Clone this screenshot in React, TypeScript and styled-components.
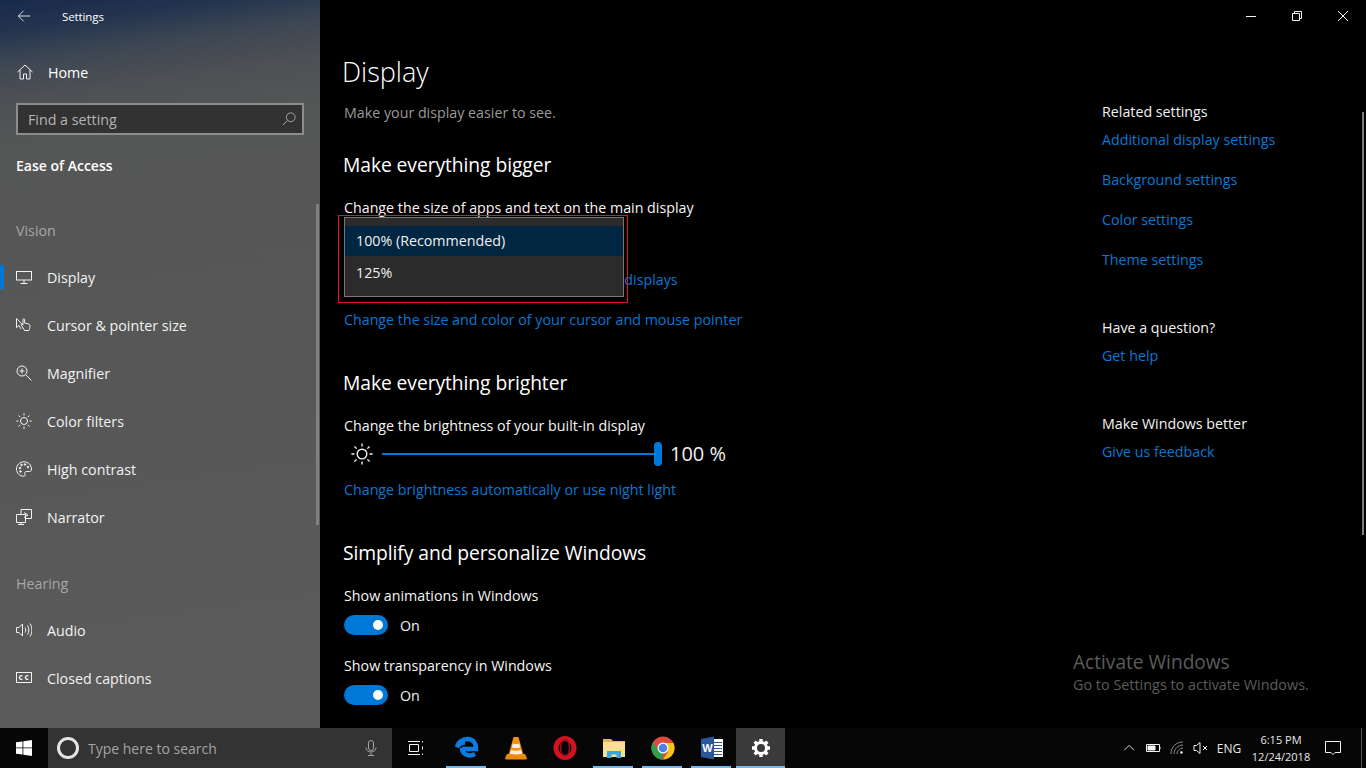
import React from 'react';
import styled, { createGlobalStyle } from 'styled-components';

const Global = createGlobalStyle`
  html, body { margin: 0; padding: 0; background: #000; overflow: hidden; }
  body { font-family: "Open Sans", "Noto Sans", "Liberation Sans", sans-serif; color: #fff; }
  * { box-sizing: border-box; }
`;

const Page = styled.div`
  width: 1366px; height: 768px; display: flex; flex-direction: column; overflow: hidden;
`;
const Windowed = styled.div`
  flex: 0 0 728px; display: flex; position: relative; overflow: hidden;
`;
const Sidebar = styled.nav`
  flex: 0 0 320px; position: relative; display: flex; flex-direction: column;
  background: linear-gradient(172deg, #182a4b 0, #24344f 32px, #3c4653 62px, #4d5054 100px, #555656 150px, #575757 400px, #5b5b5b 728px);
`;
const SideBar = styled.div`
  position: absolute; left: 316px; top: 204px; width: 3px; height: 321px; background: #808080;
`;
const TitleRow = styled.div`
  height: 32px; display: flex; align-items: center; padding-left: 17px; gap: 31px;
  font-size: 11.5px; letter-spacing: -0.1px;
`;
const HomeRow = styled.div`
  height: 48px; margin-top: 16px; display: flex; align-items: center; padding-left: 17px; gap: 15px; font-size: 14.25px;
`;
const SearchBox = styled.div`
  margin: 7px 16px 0; width: 288px; height: 32px; border: 2px solid #8c8c8c; background: #323232;
  display: flex; align-items: center; justify-content: space-between; padding: 0 6px 0 10px;
  font-size: 14.25px; color: #b4b4b4;
`;
const Category = styled.div`
  margin: 20px 0 0 16px; height: 22px; line-height: 22px; font-size: 14px; font-weight: 600;
`;
const GroupHead = styled.div<{ $top: number }>`
  margin: ${p => p.$top}px 0 0 16px; height: 22px; line-height: 21px; font-size: 14.25px; color: #a6a6a6;
`;
const NavRow = styled.div<{ $active?: boolean }>`
  height: 48px; display: flex; align-items: center; padding-left: 16px; gap: 15px; font-size: 14.25px; position: relative; color: #f2f2f2;
  &::before {
    content: ''; display: ${p => (p.$active ? 'block' : 'none')}; position: absolute; left: 0; top: 12px; width: 4px; height: 24px; background: #0078d7;
  }
`;
const NavList = styled.div<{ $top: number }>`
  margin-top: ${p => p.$top}px;
`;

const Content = styled.main`
  flex: 1; display: grid; grid-template-columns: 782px 1fr; background: #000; position: relative;
`;
const MainCol = styled.div`
  padding: 0 0 0 24px;
`;
const PageTitle = styled.h1`
  margin: 52px 0 0 -2px; height: 40px; line-height: 40px; font-size: 27px; font-weight: 300;
`;
const Sub = styled.p`
  margin: 10px 0 0; height: 22px; line-height: 22px; font-size: 14.25px; color: #9a9a9a;
`;
const Heading = styled.h2<{ $top: number }>`
  margin: ${p => p.$top}px 0 0 -1px; height: 28px; line-height: 28px; font-size: 19.3px; font-weight: 400; letter-spacing: -0.08px;
`;
const Label = styled.div<{ $top: number }>`
  margin-top: ${p => p.$top}px; height: 22px; line-height: 22px; font-size: 14.25px; color: #f5f5f5;
`;
const Link = styled.a<{ $top: number }>`
  display: block; margin-top: ${p => p.$top}px; height: 22px; line-height: 22px; font-size: 14.25px; color: #0a78d2;
`;
const SliderRow = styled.div`
  margin-top: 5px; height: 24px; display: flex; align-items: center; margin-left: 7px;
`;
const Track = styled.div`
  width: 273px; height: 2px; margin-left: 9px; background: #0078d7;
`;
const Thumb = styled.div`
  width: 8px; height: 24px; border-radius: 4px; background: #0078d7; margin-left: -1px;
`;
const SliderValue = styled.span`
  font-size: 20px; margin: 0 0 2px 8px; color: #f0f0f0;
`;
const ToggleRow = styled.div`
  margin-top: 8px; height: 20px; display: flex; align-items: center; gap: 12px; font-size: 14.25px; color: #f0f0f0;
`;
const Toggle = styled.div`
  width: 44px; height: 20px; border-radius: 10px; background: #0078d7; display: flex; align-items: center; justify-content: flex-end; padding-right: 5px;
  &::after { content: ''; width: 10px; height: 10px; border-radius: 50%; background: #fff; }
`;
const Popup = styled.div`
  position: absolute; left: 24px; top: 217px; width: 280px; height: 80px; background: #2b2b2b; border: 1px solid #767676; padding-top: 8px;
`;
const PopupOption = styled.div<{ $selected?: boolean }>`
  height: 30px; line-height: 30px; padding-left: 11px; font-size: 14.25px; margin-bottom: 2px; background: ${p => (p.$selected ? '#002642' : 'transparent')}; color: #f0f0f0;
`;
const RedBox = styled.div`
  position: absolute; left: 18px; top: 215px; width: 290px; height: 88px; border: 1px solid #e81123;
`;
const RightCol = styled.aside`
  padding-top: 101px;
`;
const RightHead = styled.div<{ $top?: number }>`
  margin-top: ${p => p.$top || 0}px; height: 22px; line-height: 22px; font-size: 14.25px; color: #f0f0f0;
`;
const WinControls = styled.div`
  position: absolute; right: 0; top: 0; display: flex;
`;
const WinBtn = styled.div`
  width: 46px; height: 32px; display: flex; align-items: center; justify-content: center;
`;
const MainScroll = styled.div`
  position: absolute; right: 2px; top: 112px; width: 2px; height: 423px; background: #7a7a7a;
`;
const Watermark = styled.div`
  position: absolute; left: 753px; top: 650px; color: #5c5c5c;
`;
const WmTitle = styled.div`
  font-size: 19.1px; line-height: 24px;
`;
const WmSub = styled.div`
  font-size: 14.4px; line-height: 22px; margin-top: 0;
`;

const Taskbar = styled.footer`
  flex: 0 0 40px; background: #060606; display: flex; align-items: stretch;
`;
const StartBtn = styled.div`
  width: 48px; display: flex; align-items: center; justify-content: center;
`;
const SearchBar = styled.div`
  width: 344px; background: #333; display: flex; align-items: center; padding: 0 13px 0 9px; font-size: 14px; color: #a3a3a3;
`;
const Cortana = styled.div`
  width: 22px; height: 22px; border-radius: 50%; border: 3px solid #e6e6e6; margin-right: 9px;
`;
const SearchText = styled.span`
  flex: 1;
`;
const TaskView = styled.div`
  width: 48px; margin-right: 2px; display: flex; align-items: center; justify-content: center;
`;
const AppBtn = styled.div<{ $running?: boolean; $active?: boolean }>`
  width: 49px; display: flex; align-items: center; justify-content: center; position: relative;
  background: ${p => (p.$active ? '#3a3a3a' : 'transparent')};
  &::after {
    content: ''; position: absolute; bottom: 0; height: 2px; background: #76b9ed;
    left: ${p => (p.$active ? '0' : '4px')}; right: ${p => (p.$active ? '0' : '5px')};
    display: ${p => (p.$running ? 'block' : 'none')};
  }
`;
const Tray = styled.div`
  margin-left: auto; display: flex; align-items: center; color: #e8e8e8; font-size: 12px;
`;
const TrayIcon = styled.div<{ $w: number; $after?: number }>`
  width: ${p => p.$w}px; margin-right: ${p => p.$after || 0}px; display: flex; align-items: center; justify-content: center;
`;
const Clock = styled.div`
  width: 72px; text-align: center; line-height: 17px; font-size: 11px;
`;
const ShowDesktop = styled.div`
  width: 5px; height: 40px; border-left: 1px solid #555; margin-left: 5px;
`;
const Lang = styled.span`
  width: 32px; text-align: center; font-size: 12px; margin-left: 1px;
`;

type IconProps = { size?: number; children: React.ReactNode };
const Ico = ({ size = 16, children }: IconProps) => (
  <svg width={size} height={size} viewBox="0 0 16 16" fill="none" stroke="#f2f2f2" strokeWidth={1}>{children}</svg>
);

const sun = <><circle cx="8" cy="8" r="3.5" /><path d="M8 0.300v2.200M8 13.500v2.200M0.300 8h2.200M13.500 8h2.200M2.500 2.500l1.600 1.600M11.900 11.900l1.600 1.600M2.500 13.500l1.600-1.600M11.900 4.100l1.600-1.600" /></>;

const navVision = [
  { label: 'Display', active: true, icon: <><rect x="0.5" y="2.5" width="15" height="8.5" /><path d="M8 11v3M4.5 14.5h7" /></> },
  { label: 'Cursor & pointer size', icon: <><path d="M0.5 1.5v9l2.5-2 2 3.5M0.5 1.5L6 7" /><path d="M6.5 10L5 7.5c.6-.7 1.4-.3 2 .5V2.5c0-1 1.6-1 1.6 0V6l4.2 1c1 .4 1.2 1 1.2 2 0 2-.5 3-1.2 4.5H8.5z" /></> },
  { label: 'Magnifier', icon: <><circle cx="6" cy="6" r="5" /><path d="M9.7 9.7l5.8 5.8M6 3.5v5M3.5 6h5" /></> },
  { label: 'Color filters', icon: sun },
  { label: 'High contrast', icon: <><path d="M8 .8C3.8.8.5 3.9.5 8s3.3 7.2 7 7.2c2 0 2-1.300 1.400-2.400-.6-1.200 0-2.300 1.500-2.300h3c1.400 0 2.100-1 2.100-2.500C15.500 3.900 12 .8 8 .8z" /><circle cx="4" cy="7" r=".8" fill="#f2f2f2" /><circle cx="5.500" cy="4" r=".8" fill="#f2f2f2" /><circle cx="9" cy="3.500" r=".8" fill="#f2f2f2" /><circle cx="12" cy="6" r=".8" fill="#f2f2f2" /><circle cx="4.500" cy="10.500" r=".8" fill="#f2f2f2" /></> },
  { label: 'Narrator', icon: <><path d="M5 5.500V.5h10.500v9H10M.5 5.500h9v8H.5zM5 13.500v2M2 15.500h6" /><path d="M8 3.500l4 2.500-4 2.500" /></> },
];
const navHearing = [
  { label: 'Audio', icon: <><path d="M.5 5.500h2.500L6.500 2v12L3 10.500H.5z" /><path d="M9 5.500c1 1.500 1 3.500 0 5M11.500 3.500c1.800 2.500 1.800 6.500 0 9M14 1.500c2.500 3.500 2.500 9.500 0 13" /></> },
  { label: 'Closed captions', icon: <><rect x="0.500" y="2.500" width="15" height="10" /><path d="M6.500 6a2 1.800 0 1 0 0 3M12.500 6a2 1.800 0 1 0 0 3" strokeWidth="1.300" /></> },
];
const links = ['Additional display settings', 'Background settings', 'Color settings', 'Theme settings'];

const EdgeLogo = () => (
  <svg width="24" height="24" viewBox="0 0 24 24"><path fill="none" stroke="#0a7ce0" strokeWidth="4.500" d="M7 13h14c.4-5.500-3-10-8.500-10C7 3 3 6.500 2 11c2-3 5-4.500 8-4.500M7.200 12c-.7 6 6 9.500 12.800 6" /></svg>
);
const VlcLogo = () => (
  <svg width="22" height="24" viewBox="0 0 22 24"><path fill="#e98a10" d="M2 18h18l2 4c0 1-1 1.500-2 1.500H2c-1 0-2-.5-2-1.500z" /><path fill="#f58f0e" d="M8.500 1h5l5 18c-2 1.500-12 1.500-15 0z" /><path fill="#eee" d="M7.800 7.500c2 .8 4.400.8 6.500 0l1 4c-2.500 1-5.800 1-8.500 0zM6 14c3 1 7 1 10 0l1 3.500c-3 1.200-9 1.200-12 0z" /></svg>
);
const OperaLogo = () => (
  <svg width="24" height="24" viewBox="0 0 24 24"><ellipse cx="12" cy="12" rx="9" ry="9.500" fill="none" stroke="#cf1322" strokeWidth="5" /><ellipse cx="12" cy="12" rx="4.500" ry="8.500" fill="none" stroke="#a80d19" strokeWidth="1.500" /></svg>
);
const FolderLogo = () => (
  <svg width="24" height="24" viewBox="0 0 24 24"><path fill="#e3b54a" d="M1 3h8l2 2h12v2H1z" /><path fill="#fadf8e" d="M1 6h22v15H1z" /><path fill="#35a8e0" d="M5 15h14v7h-4.500v-3.500h-5V22H5z" /></svg>
);
const ChromeLogo = () => (
  <svg width="24" height="24" viewBox="0 0 24 24">
    <circle cx="12" cy="12" r="11.500" fill="#dd4b3e" />
    <path fill="#2fa04a" d="M12 23.500A11.500 11.500 0 0 1 2 6.200L7 14l5 3z" />
    <path fill="#f5c518" d="M12 23.500A11.500 11.500 0 0 0 22.400 7H12l5 9z" />
    <circle cx="12" cy="12" r="5.500" fill="#fff" /><circle cx="12" cy="12" r="4.300" fill="#4a84ea" />
  </svg>
);
const WordLogo = () => (
  <svg width="24" height="24" viewBox="0 0 24 24">
    <path fill="#fff" d="M13 3h10v18H13z" />
    <path stroke="#2b579a" d="M14 6.500h8M14 9.500h8M14 12.500h8M14 15.500h8M14 18.500h8" />
    <path fill="#2b579a" d="M1 3l13-2.500v23L1 21z" />
    <text x="7.500" y="16" fontSize="11" fontWeight="700" fill="#fff" textAnchor="middle" fontFamily="Liberation Sans">W</text>
  </svg>
);
const GearIcon = () => (
  <svg width="20" height="20" viewBox="0 0 20 20">
    <circle cx="10" cy="10" r="5.500" fill="none" stroke="#fff" strokeWidth="3" />
    <path stroke="#fff" strokeWidth="3.400" d="M10 1v3M10 16v3M1 10h3M16 10h3M3.600 3.600l2.200 2.200M14.200 14.200l2.200 2.200M3.600 16.400l2.200-2.200M14.200 5.800l2.200-2.200" />
  </svg>
);

export default function App() {
  return (
    <Page>
      <Global />
      <Windowed>
        <Sidebar>
          <TitleRow>
            <Ico size={14}><path d="M15 8H1.500M7.500 2L1.500 8l6 6" /></Ico>
            <span>Settings</span>
          </TitleRow>
          <HomeRow>
            <Ico size={16}><path d="M.5 8L8 1l7.500 7M3 6v9h3.500v-5h3v5H13V6" /></Ico>
            <span>Home</span>
          </HomeRow>
          <SearchBox>
            <span>Find a setting</span>
            <Ico size={14}><circle cx="10" cy="6" r="5" stroke="#b4b4b4" /><path d="M6.500 9.500L1 15" stroke="#b4b4b4" /></Ico>
          </SearchBox>
          <Category>Ease of Access</Category>
          <GroupHead $top={43}>Vision</GroupHead>
          <NavList $top={11}>
            {navVision.map(n => (
              <NavRow key={n.label} $active={n.active}>
                <Ico size={16}>{n.icon}</Ico>
                <span>{n.label}</span>
              </NavRow>
            ))}
          </NavList>
          <GroupHead $top={32}>Hearing</GroupHead>
          <NavList $top={11}>
            {navHearing.map(n => (
              <NavRow key={n.label}>
                <Ico size={16}>{n.icon}</Ico>
                <span>{n.label}</span>
              </NavRow>
            ))}
          </NavList>
          <SideBar />
        </Sidebar>
        <Content>
          <MainCol>
            <PageTitle>Display</PageTitle>
            <Sub>Make your display easier to see.</Sub>
            <Heading $top={27}>Make everything bigger</Heading>
            <Label $top={18}>Change the size of apps and text on the main display</Label>
            <Link $top={50}>Change the size of apps and text on other displays</Link>
            <Link $top={18}>Change the size and color of your cursor and mouse pointer</Link>
            <Heading $top={38}>Make everything brighter</Heading>
            <Label $top={18}>Change the brightness of your built-in display</Label>
            <SliderRow>
              <Ico size={22}>{sun}</Ico>
              <Track />
              <Thumb />
              <SliderValue>100 %</SliderValue>
            </SliderRow>
            <Link $top={13}>Change brightness automatically or use night light</Link>
            <Heading $top={38}>Simplify and personalize Windows</Heading>
            <Label $top={18}>Show animations in Windows</Label>
            <ToggleRow><Toggle /><span>On</span></ToggleRow>
            <Label $top={20}>Show transparency in Windows</Label>
            <ToggleRow><Toggle /><span>On</span></ToggleRow>
          </MainCol>
          <RightCol>
            <RightHead>Related settings</RightHead>
            {links.map((l, i) => <Link key={l} $top={i === 0 ? 6 : 18}>{l}</Link>)}
            <RightHead $top={46}>Have a question?</RightHead>
            <Link $top={6}>Get help</Link>
            <RightHead $top={46}>Make Windows better</RightHead>
            <Link $top={6}>Give us feedback</Link>
          </RightCol>
          <Popup>
            <PopupOption $selected>100% (Recommended)</PopupOption>
            <PopupOption>125%</PopupOption>
          </Popup>
          <RedBox />
          <WinControls>
            <WinBtn><svg width="10" height="10" viewBox="0 0 10 10" stroke="#f2f2f2"><path d="M0 5.500h10" /></svg></WinBtn>
            <WinBtn><svg width="10" height="10" viewBox="0 0 10 10" fill="none" stroke="#f2f2f2"><path d="M.5 2.500h7v7h-7zM2.500 2.500v-2h7v7h-2" /></svg></WinBtn>
            <WinBtn><svg width="10" height="10" viewBox="0 0 10 10" stroke="#f2f2f2"><path d="M0 0l10 10M10 0L0 10" /></svg></WinBtn>
          </WinControls>
          <MainScroll />
          <Watermark>
            <WmTitle>Activate Windows</WmTitle>
            <WmSub>Go to Settings to activate Windows.</WmSub>
          </Watermark>
        </Content>
      </Windowed>
      <Taskbar>
        <StartBtn>
          <svg width="16" height="16" viewBox="0 0 16 16" fill="#fff"><path d="M0 2.300l6.500-.9v6.100H0zM7.300 1.300L16 0v7.500H7.300zM0 8.300h6.500v6.200L0 13.700zM7.300 8.300H16V16l-8.700-1.300z" /></svg>
        </StartBtn>
        <SearchBar>
          <Cortana />
          <SearchText>Type here to search</SearchText>
          <Ico size={16}><rect x="5.500" y="0.500" width="5" height="10" rx="2.500" stroke="#a3a3a3" /><path d="M3 7.500c0 6 10 6 10 0M8 13v2.500M5 15.500h6" stroke="#a3a3a3" /></Ico>
        </SearchBar>
        <TaskView>
          <Ico size={16}><path d="M0 1.500h12M0 14.500h12M1.500 4.500h9v7h-9zM14.500 1v1.500M14.500 6.500v3M14.500 13.500V15" /></Ico>
        </TaskView>
        <AppBtn $running><EdgeLogo /></AppBtn>
        <AppBtn><VlcLogo /></AppBtn>
        <AppBtn><OperaLogo /></AppBtn>
        <AppBtn $running><FolderLogo /></AppBtn>
        <AppBtn $running><ChromeLogo /></AppBtn>
        <AppBtn $running><WordLogo /></AppBtn>
        <AppBtn $running $active><GearIcon /></AppBtn>
        <Tray>
          <TrayIcon $w={24}><Ico size={14}><path d="M1.500 10.500L7 5l5.500 5.500" /></Ico></TrayIcon>
          <TrayIcon $w={24}><Ico size={16}><path d="M.5 4.500h13v7H.5zM14 7v2" /><path fill="#f2f2f2" d="M2 6h7v4H2z" /></Ico></TrayIcon>
          <TrayIcon $w={24}><Ico size={16}><path d="M1 14C1 7 6 2 13 2M4 14c0-5 4-9 9-9M7 14c0-3 3-6 6-6" stroke="#8a8a8a" /><circle cx="11.500" cy="12.500" r="1.300" fill="#f2f2f2" stroke="none" /></Ico></TrayIcon>
          <TrayIcon $w={22}><Ico size={16}><path d="M1 5.500h2.500L7 2.500v11l-3.500-3H1zM10 6l4 4M14 6l-4 4" /></Ico></TrayIcon>
          <Lang>ENG</Lang>
          <Clock>6:15 PM<br />12/24/2018</Clock>
          <TrayIcon $w={32} $after={7}><Ico size={16}><path d="M.5 1.500h15v11h-5.500l-2 2-2-2H.5z" /></Ico></TrayIcon>
          <ShowDesktop />
        </Tray>
      </Taskbar>
    </Page>
  );
}
